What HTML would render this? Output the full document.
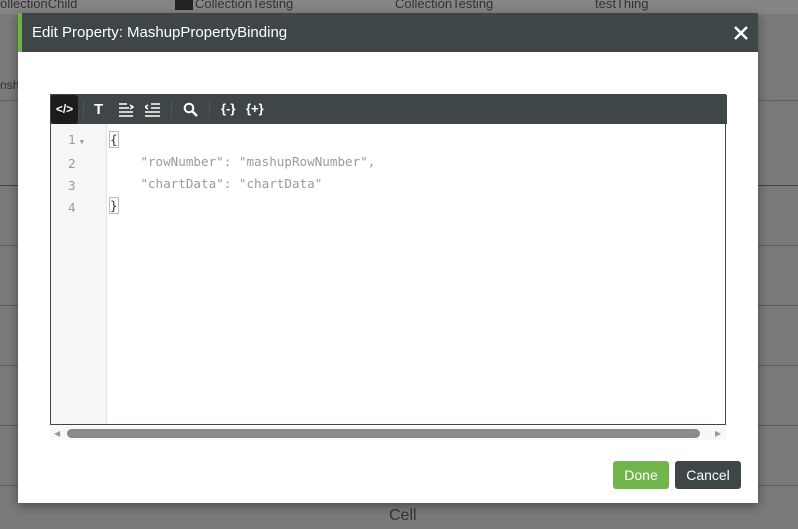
<!DOCTYPE html>
<html><head><style>
body{margin:0;width:798px;height:529px;background:#7a7a7a;position:relative;overflow:hidden;font-family:"Liberation Sans",sans-serif}
.abs{position:absolute}
.line{position:absolute;left:0;width:798px;height:1px;background:#5e5e5e}
.code{font-family:"DejaVu Sans Mono","Liberation Mono",monospace;font-size:12.6px;color:#9a9a9a}
</style></head><body>
<div class="abs" style="left:0;top:0;width:798px;height:14px;background:#858585"></div>
<div class="abs" style="left:0;top:-4px;font-size:13px;color:#333">ollectionChild</div>
<div class="abs" style="left:175px;top:0;width:18px;height:10px;background:#222"></div>
<div class="abs" style="left:195px;top:-4px;font-size:13px;color:#333">CollectionTesting</div>
<div class="abs" style="left:395px;top:-4px;font-size:13px;color:#333">CollectionTesting</div>
<div class="abs" style="left:595px;top:-4px;font-size:13px;color:#333">testThing</div>
<div class="abs" style="left:0;top:78px;font-size:12px;color:#333">nsh</div>
<div class="line" style="top:100px"></div>
<div class="line" style="top:185px;background:#444"></div>
<div class="line" style="top:245px"></div>
<div class="line" style="top:305px"></div>
<div class="line" style="top:365px"></div>
<div class="line" style="top:425px"></div>
<div class="line" style="top:485px"></div>
<div class="abs" style="left:389px;top:507px;font-size:16px;color:#333">Cell</div>

<div class="abs" style="left:18px;top:13px;width:740px;height:490px;background:#fff;box-shadow:0 3px 10px rgba(0,0,0,.4)">
 <div class="abs" style="left:0;top:0;width:740px;height:39px;background:#3f4648;border-left:4px solid #6db33f;box-sizing:border-box"></div>
 <div class="abs" style="left:14px;top:11px;color:#fff;font-size:15px">Edit Property: MashupPropertyBinding</div>
 <svg class="abs" style="left:715px;top:12px" width="16" height="16"><path d="M2 2L14 14M14 2L2 14" stroke="#fff" stroke-width="2.5"/></svg>

 <div class="abs" style="left:32px;top:81px;width:676px;height:331px;border:1px solid #3f4648;box-sizing:border-box">
  <div class="abs" style="left:0;top:0;width:676px;height:29px;background:#3f4648"></div>
  <div class="abs" style="left:0;top:0;width:27px;height:29px;background:#1c1c1c;border-radius:3px;color:#fff;font-size:12px;font-weight:bold;line-height:29px;text-align:center">&lt;/&gt;</div>
  <div class="abs" style="left:32px;top:4px;width:1px;height:20px;background:#555"></div>
  <div class="abs" style="left:43px;top:6px;color:#fff;font-size:15px;font-weight:bold">T</div>
  <svg class="abs" style="left:68px;top:8px" width="16" height="14"><path d="M0 1h8M0 5h10M0 9h14M0 13h14M11 2l3 2-3 2" stroke="#fff" stroke-width="1.6" fill="none"/></svg>
  <svg class="abs" style="left:94px;top:8px" width="16" height="14"><path d="M6 1h9M6 5h9M0 9h15M0 13h15M3 2l-3 2 3 2" stroke="#fff" stroke-width="1.6" fill="none"/></svg>
  <div class="abs" style="left:120px;top:4px;width:1px;height:20px;background:#555"></div>
  <svg class="abs" style="left:132px;top:7px" width="15" height="15"><circle cx="6" cy="6" r="4.3" stroke="#fff" stroke-width="2" fill="none"/><path d="M9 9l5 5" stroke="#fff" stroke-width="2.5"/></svg>
  <div class="abs" style="left:158px;top:4px;width:1px;height:20px;background:#555"></div>
  <div class="abs" style="left:170px;top:6px;color:#fff;font-size:13px;font-weight:bold">{-}</div>
  <div class="abs" style="left:195px;top:6px;color:#fff;font-size:13px;font-weight:bold">{+}</div>
  <div class="abs" style="left:0;top:29px;width:55px;height:300px;background:#f6f6f6;border-right:1px solid #e4e4e4"></div>
  <div class="abs code" style="left:17px;top:34px;line-height:22px">1<span style="font-size:7px"> ▼</span><br>2<br>3<br>4</div>
  <div class="abs code" style="left:59px;top:34px;line-height:22px;white-space:pre"><span style="outline:1px solid #bbb;color:#333">{</span>
    "rowNumber": "mashupRowNumber",
    "chartData": "chartData"
<span style="outline:1px solid #bbb;color:#333">}</span></div>
 </div>
 <div class="abs" style="left:32px;top:413px;width:676px;height:14px;background:#f8f8f8"></div>
 <div class="abs" style="left:49px;top:416px;width:633px;height:9px;background:#8a8a8a;border-radius:5px"></div>
 <div class="abs" style="left:36px;top:416px;color:#999;font-size:8px">◀</div>
 <div class="abs" style="left:697px;top:416px;color:#999;font-size:8px">▶</div>
 <div class="abs" style="left:595px;top:448px;width:56px;height:28px;background:#72b54a;border-radius:3px;color:#fff;font-size:14px;line-height:28px;text-align:center">Done</div>
 <div class="abs" style="left:657px;top:448px;width:66px;height:28px;background:#3f4648;border-radius:3px;color:#fff;font-size:14px;line-height:28px;text-align:center">Cancel</div>
</div>
</body></html>
